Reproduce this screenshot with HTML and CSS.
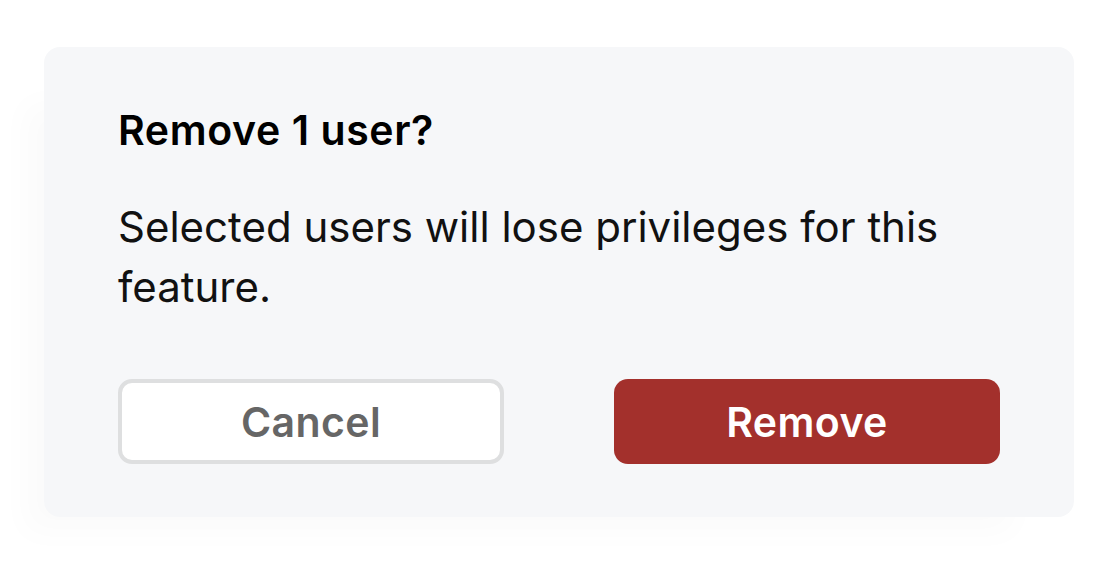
FILE: index.html
```html
<!DOCTYPE html>
<html lang="en">
<head>
    <meta charset="UTF-8">
    <title>Remove user</title>
    <link rel="stylesheet" href="styles.css">
</head>
<body>
    <div class="dialog">
        <div class="dialog-title">Remove 1 user?</div>
        <div class="dialog-text">Selected users will lose privileges for this feature.</div>
        <div class="dialog-buttons">
            <button class="btn btn-cancel">Cancel</button>
            <button class="btn btn-remove">Remove</button>
        </div>
    </div>
</body>
</html>
```

FILE: styles.css
```css
body {
    margin: 0;
    padding: 47px 44px 0 44px;
    background: #ffffff;
    font-family: 'Inter', 'Liberation Sans', sans-serif;
    height: 564px;
    box-sizing: border-box;
    overflow: hidden;
}

.dialog {
    width: 1030px;
    height: 470px;
    box-sizing: border-box;
    background: #f6f7f9;
    border-radius: 16px;
    padding: 58px 74px 53px 74px;
    box-shadow: -40px 36px 30px -20px rgba(0, 0, 0, 0.02);
    display: flex;
    flex-direction: column;
}

.dialog-title {
    font-size: 41px;
    font-weight: 600;
    color: #000;
    line-height: 50px;
    letter-spacing: 0.6px;
}

.dialog-text {
    font-size: 42px;
    color: #111;
    line-height: 60px;
    margin-top: 42px;
}

.dialog-buttons {
    display: flex;
    justify-content: space-between;
    margin-top: auto;
}

.btn {
    width: 386px;
    height: 85px;
    box-sizing: border-box;
    border-radius: 14px;
    font-family: inherit;
    font-size: 41px;
    font-weight: 600;
    letter-spacing: 0.4px;
    cursor: pointer;
}

.btn-cancel {
    background: #ffffff;
    border: 4px solid #dedfe0;
    color: #666666;
}

.btn-remove {
    background: #a3302c;
    border: none;
    color: #ffffff;
}
```
